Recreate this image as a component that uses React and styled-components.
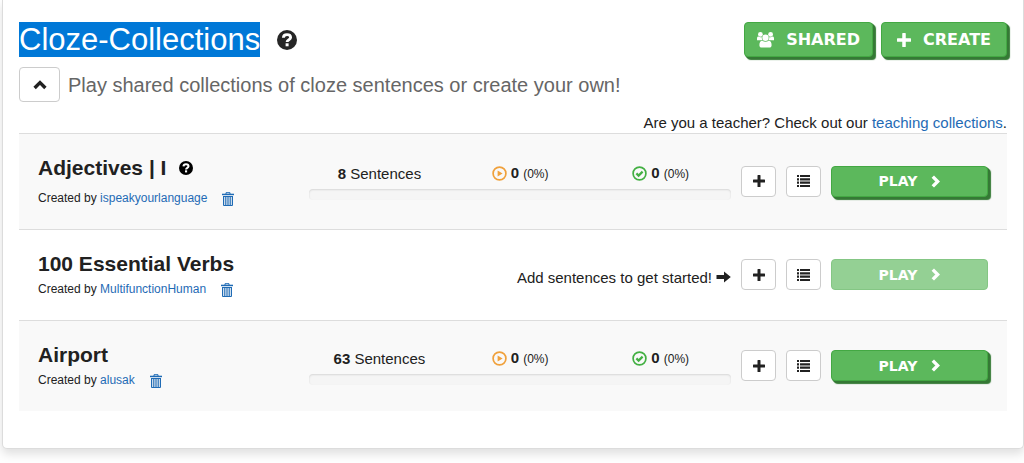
import React from 'react';
import styled, { createGlobalStyle, css } from 'styled-components';

const GlobalStyle = createGlobalStyle`
  * {
    box-sizing: border-box;
  }

  body {
    margin: 0;
    padding-bottom: 14px;
    background: #fefefe;
    color: #212121;
    font-family: 'Liberation Sans', Arial, sans-serif;
    font-size: 15px;
    line-height: 21px;
  }
`;

const Panel = styled.main`
  margin-left: 2px;
  padding: 22px 16px 37px;
  background: #fff;
  border: 1px solid #dcdcdc;
  border-top: 0;
  border-radius: 0 0 5px 5px;
  box-shadow: 0 5px 10px rgba(0, 0, 0, 0.12);
`;

const Header = styled.header`
  display: flex;
  justify-content: space-between;
  align-items: flex-start;
`;

const Heading = styled.div`
  display: flex;
  align-items: center;
  gap: 17px;
`;

const PageTitle = styled.h1`
  margin: 0;
  font-size: 31px;
  font-weight: 400;
  line-height: 35px;
  color: #fff;
  background: #0078d7;
`;

const HeaderActions = styled.div`
  display: flex;
  gap: 8px;
`;

const Intro = styled.div`
  display: flex;
  align-items: center;
  gap: 8px;
  margin-top: 10px;
`;

const IntroText = styled.p`
  margin: 0;
  font-size: 20px;
  line-height: 28px;
  color: #666;
`;

const TeacherNote = styled.p`
  margin: 10px 0 0;
  text-align: right;
`;

const Link = styled.a`
  color: #1f6bb5;
  text-decoration: none;
`;

const buttonBase = css`
  display: inline-flex;
  align-items: center;
  justify-content: center;
  padding: 0;
  border-radius: 4px;
  cursor: pointer;
`;

const IconButton = styled.button`
  ${buttonBase}
  width: ${(props) => (props.$large ? 41 : 35)}px;
  height: ${(props) => (props.$large ? 35 : 31)}px;
  color: #212121;
  background: #fff;
  border: 1px solid #ccc;
`;

const GreenButton = styled.button`
  ${buttonBase}
  gap: ${(props) => (props.$large ? 12 : 14)}px;
  height: ${(props) => (props.$large ? 35 : 31)}px;
  padding: 0 12px;
  min-width: ${(props) => (props.$large ? 126 : 157)}px;
  color: #fff;
  background: #5cb85c;
  border: 1px solid #43a843;
  font-family: 'DejaVu Sans', sans-serif;
  font-size: ${(props) => (props.$large ? 16 : 14)}px;
  font-weight: 700;
  box-shadow: 1px 1px 0 #357935, 2px 2px 0 #357935, 3px 3px 1px #357935;

  &:disabled {
    opacity: 0.65;
    box-shadow: none;
    cursor: default;
  }
`;

const BareButton = styled.button`
  display: inline-flex;
  padding: 0;
  border: 0;
  background: none;
  color: ${(props) => props.$color};
  cursor: pointer;
`;

const List = styled.ul`
  margin: 0;
  padding: 0;
  list-style: none;
`;

const Row = styled.li`
  display: grid;
  grid-template-columns: minmax(0, 13fr) minmax(0, 21fr) auto;
  align-items: center;
  gap: 10px;
  padding: 20px 19px 21px;
  border-top: 1px solid #ddd;

  &:nth-child(odd) {
    background: #f9f9f9;
  }
`;

const NameLine = styled.div`
  display: flex;
  align-items: center;
  gap: 13px;
  min-height: 27px;
  margin-bottom: ${(props) => (props.$spaced ? 8 : 3)}px;
`;

const Name = styled.h2`
  margin: 0;
  font-size: 21px;
  font-weight: 700;
  line-height: 25px;
`;

const Author = styled.div`
  display: flex;
  align-items: center;
  gap: 15px;
  font-size: 12px;
  line-height: 19px;
`;

const Stats = styled.div`
  display: grid;
  grid-template-columns: repeat(3, 1fr);
  row-gap: 4px;
`;

const Stat = styled.div`
  display: flex;
  align-items: center;
  justify-content: center;
  gap: 4px;
`;

const Percent = styled.small`
  font-size: 12px;
`;

const Track = styled.div`
  grid-column: 1 / -1;
  height: 11px;
  border-radius: 4px;
  background: #f5f5f5;
  box-shadow: inset 0 1px 2px rgba(0, 0, 0, 0.12);
`;

const EmptyNote = styled.div`
  display: flex;
  align-items: center;
  justify-content: flex-end;
  gap: 4px;
  padding-top: 5px;
`;

const Actions = styled.div`
  display: flex;
  gap: 10px;
`;

const Svg = styled.svg`
  flex: none;
  display: block;
  fill: currentColor;
`;

const HelpIcon = ({ size }) => (
  <Svg width={size} height={size} viewBox="0 0 20 20" aria-hidden="true">
    <circle cx="10" cy="10" r="10" />
    <path
      d="M6.4 7.7C6.500 5.500 8 4.600 10 4.600s3.600 1 3.600 2.900c0 2.300-3.500 2.100-3.500 4.500"
      fill="none"
      stroke="#fff"
      strokeWidth="2.9"
    />
    <path fill="#fff" d="M8.6 13.300h3v3h-3z" />
  </Svg>
);

const PlusIcon = ({ size }) => (
  <Svg width={size} height={size} viewBox="0 0 12 12" aria-hidden="true">
    <path d="M5 0h2q.5 0 .5.5v4h4q.5 0 .5.5v2q0 .5-.5.5h-4v4q0 .5-.5.5H5q-.5 0-.5-.5v-4h-4Q0 7.500 0 7V5q0-.5.5-.5h4v-4Q4.500 0 5 0z" />
  </Svg>
);

const UsersIcon = () => (
  <Svg width="17" height="16" viewBox="0 0 17 16" aria-hidden="true">
    <circle cx="3.4" cy="2.4" r="2.4" />
    <circle cx="13.6" cy="2.4" r="2.4" />
    <path d="M0 8.300V6.500C0 5 .7 4.600 1.400 4.600c1.300.7 2.400.7 3.400.4C4.600 6.500 5 7.500 5.600 8.300zM17 8.300V6.500c0-1.500-.7-1.900-1.400-1.900-1.300.7-2.400.7-3.400.4.2 1.500-.2 2.500-.8 3.300z" />
    <circle cx="8.5" cy="5.800" r="3.200" />
    <path d="M2.400 13.200c0-2.400.8-4.500 3-4.500 1.900 1.500 4.300 1.500 6.200 0 2.200 0 3 2.100 3 4.500 0 1.500-.9 2.300-2.300 2.300H4.700c-1.400 0-2.300-.8-2.300-2.300z" />
  </Svg>
);

const ChevronUpIcon = () => (
  <Svg width="14" height="10" viewBox="0 0 14 10" aria-hidden="true">
    <path d="M1.600 8L7 2.600 12.400 8" fill="none" stroke="currentColor" strokeWidth="3.400" />
  </Svg>
);

const ChevronRightIcon = () => (
  <Svg width="9" height="13" viewBox="0 0 9 13" aria-hidden="true">
    <path d="M1.800 1.600l4.900 4.900-4.900 4.900" fill="none" stroke="currentColor" strokeWidth="3.400" />
  </Svg>
);

const ListIcon = () => (
  <Svg width="13" height="12" viewBox="0 0 13 12" aria-hidden="true">
    {[0, 3.3, 6.6, 9.9].map((y) => (
      <path key={y} d={`M0 ${y}h2v2.100H0zM3 ${y}h10v2.100H3z`} />
    ))}
  </Svg>
);

const TrashIcon = () => (
  <Svg width="12" height="14" viewBox="0 0 12 14" aria-hidden="true">
    <path d="M4 2V.7h4V2" fill="none" stroke="currentColor" />
    <path d="M0 1.700h12v1.500H0z" />
    <path
      fillRule="evenodd"
      d="M1 4h10v9q0 1-1 1H2q-1 0-1-1zM2.200 5v8h1V5zM4.400 5v8h1V5zM6.600 5v8h1V5zM8.800 5v8h1V5z"
    />
  </Svg>
);

const ArrowIcon = () => (
  <Svg width="15" height="12" viewBox="0 0 15 12" aria-hidden="true">
    <path d="M.5 4h7.500V.4L14.800 6l-6.800 5.600V8H.5z" />
  </Svg>
);

const PlayingIcon = () => (
  <Svg width="15" height="15" viewBox="0 0 15 15" color="#f0a13c" aria-hidden="true">
    <circle cx="7.5" cy="7.5" r="6.400" fill="none" stroke="currentColor" strokeWidth="1.700" />
    <path d="M5.600 4.500l5 3-5 3z" />
  </Svg>
);

const MasteredIcon = () => (
  <Svg width="15" height="15" viewBox="0 0 15 15" color="#43b043" aria-hidden="true">
    <circle cx="7.5" cy="7.5" r="6.400" fill="none" stroke="currentColor" strokeWidth="1.700" />
    <path d="M4.400 7.400l2.200 2.200 4-4" fill="none" stroke="currentColor" strokeWidth="2.200" />
  </Svg>
);

const Progress = ({ sentences }) => (
  <Stats>
    <Stat>
      <span>
        <b>{sentences}</b> Sentences
      </span>
    </Stat>
    <Stat>
      <PlayingIcon />
      <span>
        <b>0</b> <Percent>(0%)</Percent>
      </span>
    </Stat>
    <Stat>
      <MasteredIcon />
      <span>
        <b>0</b> <Percent>(0%)</Percent>
      </span>
    </Stat>
    <Track />
  </Stats>
);

const CollectionRow = ({ name, author, sentences, hasHelp }) => (
  <Row>
    <div>
      <NameLine $spaced={hasHelp}>
        <Name>{name}</Name>
        {hasHelp && (
          <BareButton $color="#000" aria-label="About this collection">
            <HelpIcon size={14} />
          </BareButton>
        )}
      </NameLine>
      <Author>
        <span>
          Created by <Link href="#">{author}</Link>
        </span>
        <BareButton $color="#1f6bb5" aria-label="Delete">
          <TrashIcon />
        </BareButton>
      </Author>
    </div>
    {sentences > 0 ? (
      <Progress sentences={sentences} />
    ) : (
      <EmptyNote>
        Add sentences to get started!
        <ArrowIcon />
      </EmptyNote>
    )}
    <Actions>
      <IconButton aria-label="Add sentences">
        <PlusIcon size={12} />
      </IconButton>
      <IconButton aria-label="List sentences">
        <ListIcon />
      </IconButton>
      <GreenButton disabled={sentences === 0}>
        PLAY
        <ChevronRightIcon />
      </GreenButton>
    </Actions>
  </Row>
);

class App extends React.Component {
  constructor(props) {
    super(props);
    this.state = {
      collections: [
        {
          name: 'Adjectives | I',
          author: 'ispeakyourlanguage',
          sentences: 8,
          hasHelp: true
        },
        {
          name: '100 Essential Verbs',
          author: 'MultifunctionHuman',
          sentences: 0
        },
        {
          name: 'Airport',
          author: 'alusak',
          sentences: 63
        }
      ]
    };
  }

  render() {
    return (
      <>
        <GlobalStyle />
        <Panel>
          <Header>
            <Heading>
              <PageTitle>Cloze-Collections</PageTitle>
              <BareButton $color="#262626" aria-label="Help">
                <HelpIcon size={20} />
              </BareButton>
            </Heading>
            <HeaderActions>
              <GreenButton $large>
                <UsersIcon />
                SHARED
              </GreenButton>
              <GreenButton $large>
                <PlusIcon size={14} />
                CREATE
              </GreenButton>
            </HeaderActions>
          </Header>
          <Intro>
            <IconButton $large aria-label="Collapse">
              <ChevronUpIcon />
            </IconButton>
            <IntroText>Play shared collections of cloze sentences or create your own!</IntroText>
          </Intro>
          <TeacherNote>
            Are you a teacher? Check out our <Link href="#">teaching collections</Link>.
          </TeacherNote>
          <List>
            {this.state.collections.map((collection) => (
              <CollectionRow key={collection.name} {...collection} />
            ))}
          </List>
        </Panel>
      </>
    );
  }
}

export default App;
